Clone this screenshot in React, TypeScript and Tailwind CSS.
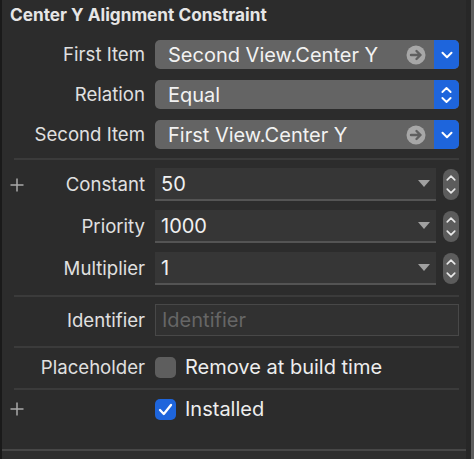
import React from "react";

const font = { fontFamily: "Inter, 'Noto Sans', sans-serif" };

function ArrowCircle() {
  return (
    <svg width="20" height="20" viewBox="0 0 20 20">
      <circle cx="10" cy="10" r="9.5" fill="#a7a7a7" />
      <path d="M5 10 H14.5 M10.5 6 L14.5 10 L10.5 14" stroke="#5f5f5f" strokeWidth="2.4" fill="none" strokeLinecap="round" strokeLinejoin="round" />
    </svg>
  );
}

function ChevDown({ color = "#ffffff", w = 12 }: { color?: string; w?: number }) {
  return (
    <svg width={w} height="8" viewBox="0 0 12 8">
      <path d="M1.5 1.8 L6 6.2 L10.5 1.8" stroke={color} strokeWidth="2" fill="none" strokeLinecap="round" strokeLinejoin="round" />
    </svg>
  );
}

function ChevUp({ color = "#ffffff", w = 12 }: { color?: string; w?: number }) {
  return (
    <svg width={w} height="8" viewBox="0 0 12 8">
      <path d="M1.5 6.2 L6 1.8 L10.5 6.2" stroke={color} strokeWidth="2" fill="none" strokeLinecap="round" strokeLinejoin="round" />
    </svg>
  );
}

function Popup({ text, kind }: { text: string; kind: "arrow" | "updown" }) {
  return (
    <div className="flex-1 h-[29px] rounded-[5px] bg-[#646464] flex items-center overflow-hidden">
      <div className="flex-1 pl-[13px] text-[20px] text-[#f2f2f2] leading-none">{text}</div>
      {kind === "arrow" && (
        <div className="mr-[8px] flex items-center">
          <ArrowCircle />
        </div>
      )}
      <div className="w-[25px] h-full bg-[#1e65dc] flex flex-col items-center justify-center gap-[2px]">
        {kind === "updown" ? (
          <>
            <ChevUp w={11} />
            <ChevDown w={11} />
          </>
        ) : (
          <ChevDown />
        )}
      </div>
    </div>
  );
}

function Label({ text, plus }: { text: string; plus?: boolean }) {
  return (
    <div className="w-[143px] flex items-center justify-between shrink-0">
      <div className="pl-[8px] w-[24px]">
        {plus && (
          <svg width="14" height="14" viewBox="0 0 14 14">
            <path d="M7 0.5 V13.5 M0.5 7 H13.5" stroke="#a9a9a9" strokeWidth="1.5" />
          </svg>
        )}
      </div>
      <div className="text-[18.6px] text-[#e0e0e0] leading-none text-right">{text}</div>
    </div>
  );
}

function ComboRow({ label, value, plus }: { label: string; value: string; plus?: boolean }) {
  return (
    <div className="flex items-center h-[33px]">
      <Label text={label} plus={plus} />
      <div className="ml-[10px] flex-1 h-[33px] bg-[#363636] border-b-2 border-[#545454] flex items-center pl-[6px] pr-[6px]">
        <div className="flex-1 text-[20px] text-[#f0f0f0] leading-none">{value}</div>
        <svg width="12" height="7" viewBox="0 0 12 7">
          <path d="M0 0 H12 L6 7 Z" fill="#a0a0a0" />
        </svg>
      </div>
      <div className="ml-[7px] w-[16px] h-[31px] rounded-full bg-[#5c5c5c] flex flex-col items-center justify-center gap-[5px]">
        <ChevUp color="#e8e8e8" w={10} />
        <ChevDown color="#e8e8e8" w={10} />
      </div>
    </div>
  );
}

function Sep() {
  return <div className="ml-[12px] h-[2px] bg-[#3b3b3b]" />;
}

function Checkbox({ checked }: { checked?: boolean }) {
  return (
    <div
      className={
        "w-[21px] h-[21px] rounded-[5px] flex items-center justify-center shrink-0 " +
        (checked ? "bg-[#1e65dc]" : "bg-[#5e5e5e]")
      }
    >
      {checked && (
        <svg width="15" height="13" viewBox="0 0 15 13">
          <path d="M2 7 L5.8 11 L13 2" stroke="#ffffff" strokeWidth="2.3" fill="none" strokeLinecap="round" strokeLinejoin="round" />
        </svg>
      )}
    </div>
  );
}

export default function App() {
  return (
    <div className="w-[474px] h-[459px] bg-[#2c2c2c] flex overflow-hidden" style={font}>
      <div className="w-[2px] bg-[#1a1a1a]" />
      <div className="flex-1 flex flex-col pr-[7px]">
        <div className="h-[30px] pl-[8px] flex items-center text-[17.2px] font-bold text-[#e6e6e6] leading-none">
          Center Y Alignment Constraint
        </div>
        <div className="mt-[10px] flex items-center">
          <Label text="First Item" />
          <div className="ml-[10px] flex-1 flex">
            <Popup text="Second View.Center Y" kind="arrow" />
          </div>
        </div>
        <div className="mt-[11px] flex items-center">
          <Label text="Relation" />
          <div className="ml-[10px] flex-1 flex">
            <Popup text="Equal" kind="updown" />
          </div>
        </div>
        <div className="mt-[11px] flex items-center">
          <Label text="Second Item" />
          <div className="ml-[10px] flex-1 flex">
            <Popup text="First View.Center Y" kind="arrow" />
          </div>
        </div>
        <div className="mt-[9px]">
          <Sep />
        </div>
        <div className="mt-[8px]">
          <ComboRow label="Constant" value="50" plus />
        </div>
        <div className="mt-[9px]">
          <ComboRow label="Priority" value="1000" />
        </div>
        <div className="mt-[9px]">
          <ComboRow label="Multiplier" value="1" />
        </div>
        <div className="mt-[10px]">
          <Sep />
        </div>
        <div className="mt-[7px] flex items-center">
          <Label text="Identifier" />
          <div className="ml-[10px] flex-1 h-[32px] bg-[#313131] border border-[#484848] flex items-center pl-[6px]">
            <span className="text-[20px] text-[#666666] leading-none">Identifier</span>
          </div>
        </div>
        <div className="mt-[10px]">
          <Sep />
        </div>
        <div className="mt-[8px] h-[22px] flex items-center">
          <Label text="Placeholder" />
          <div className="ml-[10px] flex items-center">
            <Checkbox />
            <span className="ml-[9px] text-[20px] text-[#eeeeee] leading-none">Remove at build time</span>
          </div>
        </div>
        <div className="mt-[10px]">
          <Sep />
        </div>
        <div className="mt-[8px] h-[22px] flex items-center">
          <Label text="" plus />
          <div className="ml-[10px] flex items-center">
            <Checkbox checked />
            <span className="ml-[9px] text-[20px] text-[#eeeeee] leading-none">Installed</span>
          </div>
        </div>
        <div className="mt-[29px] -mr-[7px] h-[2px] bg-[#474747]" />
        <div className="flex-1 bg-[#2e2e2e] -mr-[7px]" />
      </div>
      <div className="w-[5px] bg-[#272727]" />
      <div className="w-[3px] bg-[#5e5e5e]" />
    </div>
  );
}
